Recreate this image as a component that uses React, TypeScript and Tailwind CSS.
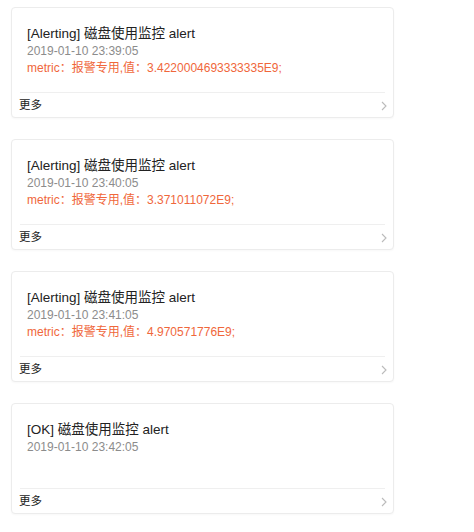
import React from 'react';

type Alert = {
  status: string;
  time: string;
  value?: string;
};

const alerts: Alert[] = [
  { status: 'Alerting', time: '2019-01-10 23:39:05', value: '3.4220004693333335E9' },
  { status: 'Alerting', time: '2019-01-10 23:40:05', value: '3.371011072E9' },
  { status: 'Alerting', time: '2019-01-10 23:41:05', value: '4.970571776E9' },
  { status: 'OK', time: '2019-01-10 23:42:05' },
];

const Chevron: React.FC = () => (
  <svg width="6" height="10" viewBox="0 0 6 10" fill="none" className="mr-[-2px]">
    <path d="M1 1l4 4-4 4" stroke="#bbbbbb" strokeWidth="1.1" />
  </svg>
);

const AlertCard: React.FC<{ alert: Alert }> = ({ alert }) => (
  <div className="w-[383px] bg-white border border-[#ececec] rounded-[4px] shadow-[0_1px_2px_rgba(0,0,0,0.03)]">
    {/* Body */}
    <div className="px-[15px] pt-[17px] pb-[15px]">
      <div className="text-[13.5px] leading-[18px] text-[#222]">
        [{alert.status}] 磁盘使用监控 alert
      </div>
      <div className="text-[12px] leading-[17px] text-[#8c8c8c]">{alert.time}</div>
      <div className="text-[12px] leading-[17px] text-[#f0673b] h-[17px]">
        {alert.value && <>metric：报警专用,值：{alert.value};</>}
      </div>
    </div>

    {/* Footer */}
    <div className="mx-2 border-t border-[#efefef] h-[25px] pt-[2px] flex items-center justify-between">
      <span className="text-[11.5px] text-[#222] ml-[-1px]">更多</span>
      <Chevron />
    </div>
  </div>
);

const App: React.FC = () => {
  return (
    <div
      className="min-h-screen bg-white pt-[7px] pl-[11px]"
      style={{ fontFamily: '"Liberation Sans", "Noto Sans CJK SC", sans-serif' }}
    >
      <div className="flex flex-col gap-[21px]">
        {alerts.map((a, i) => (
          <AlertCard key={i} alert={a} />
        ))}
      </div>
    </div>
  );
};

export default App;
